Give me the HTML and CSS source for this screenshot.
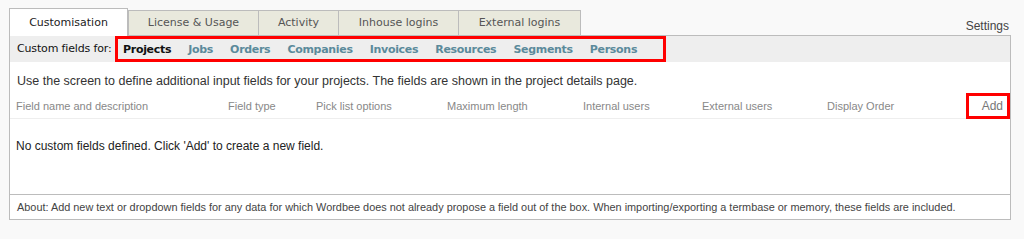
FILE: index.html
```html
<!DOCTYPE html>
<html>
<head>
<meta charset="utf-8">
<link rel="stylesheet" href="styles.css">
</head>
<body>
<div class="page">
  <div class="tabbar">
    <div class="tab tab-active t1">Customisation</div>
    <div class="tab t2">License &amp; Usage</div>
    <div class="tab t3">Activity</div>
    <div class="tab t4">Inhouse logins</div>
    <div class="tab t5">External logins</div>
    <div class="settings">Settings</div>
  </div>
  <div class="panel">
    <div class="band">
      <span class="band-label">Custom fields for:</span>
      <div class="entities">
        <span class="entity current">Projects</span>
        <span class="entity">Jobs</span>
        <span class="entity">Orders</span>
        <span class="entity">Companies</span>
        <span class="entity">Invoices</span>
        <span class="entity">Resources</span>
        <span class="entity">Segments</span>
        <span class="entity">Persons</span>
      </div>
    </div>
    <div class="intro">Use the screen to define additional input fields for your projects. The fields are shown in the project details page.</div>
    <div class="header-row">
      <span class="c1">Field name and description</span>
      <span class="c2">Field type</span>
      <span class="c3">Pick list options</span>
      <span class="c4">Maximum length</span>
      <span class="c5">Internal users</span>
      <span class="c6">External users</span>
      <span class="c7">Display Order</span>
      <span class="add">Add</span>
    </div>
    <div class="empty">No custom fields defined. Click 'Add' to create a new field.</div>
    <div class="about">About: Add new text or dropdown fields for any data for which Wordbee does not already propose a field out of the box. When importing/exporting a termbase or memory, these fields are included.</div>
  </div>
</div>
</body>
</html>
```

FILE: styles.css
```css
html, body {
  margin: 0;
  padding: 0;
  background: #f9f9f9;
}
.page {
  padding: 8px 13px 0 9px;
  font-family: "Liberation Sans", Arial, sans-serif;
}
.tabbar {
  display: flex;
  align-items: flex-end;
  height: 27px;
}
.tab {
  box-sizing: border-box;
  height: 25px;
  border: 1px solid #bcbcbc;
  border-bottom: none;
  background: #e9e9dd;
  color: #555;
  font-family: "DejaVu Sans", Verdana, sans-serif;
  font-size: 11px;
  text-align: center;
  line-height: 23px;
  margin-left: -1px;
}
.tab-active {
  position: relative;
  z-index: 2;
  height: 28px;
  margin-bottom: -1px;
  margin-left: 0;
  background: #fff;
  color: #222;
  line-height: 28px;
}
.t1 { width: 119px; }
.t2 { width: 131px; margin-left: 0; }
.t3 { width: 81px; }
.t4 { width: 121px; }
.t5 { width: 123px; }
.settings {
  margin-left: auto;
  margin-right: 2px;
  font-size: 12px;
  color: #444;
  padding-bottom: 2px;
}
.panel {
  border: 1px solid #bcbcbc;
  background: #fff;
}
.band {
  display: flex;
  align-items: stretch;
  height: 26px;
  background: #eeeeee;
}
.band-label {
  padding-left: 7px;
  width: 98px;
  font-family: "DejaVu Sans", Verdana, sans-serif;
  font-size: 11px;
  letter-spacing: -0.15px;
  color: #111;
  line-height: 26px;
}
.entities {
  box-sizing: border-box;
  width: 551px;
  border: 3px solid #f00;
  display: flex;
  align-items: center;
  gap: 17px;
  padding-left: 5px;
  font-family: "DejaVu Sans", Verdana, sans-serif;
  font-size: 11px;
  letter-spacing: -0.3px;
  font-weight: bold;
  color: #5b8a9b;
}
.entity.current {
  color: #111;
}
.intro {
  margin-top: 12px;
  padding-left: 7px;
  font-size: 12.5px;
  line-height: 14px;
  color: #333;
}
.header-row {
  display: flex;
  align-items: center;
  height: 25px;
  margin-top: 5px;
  padding-left: 6px;
  border-bottom: 1px solid #eeeeee;
  font-size: 11px;
  color: #888;
}
.c1 { width: 212px; }
.c2 { width: 88px; }
.c3 { width: 131px; }
.c4 { width: 136px; }
.c5 { width: 119px; }
.c6 { width: 125px; }
.c7 { width: 100px; }
.add {
  box-sizing: border-box;
  margin-left: auto;
  height: 26px;
  margin-bottom: -1px;
  width: 44px;
  border: 3px solid #f00;
  text-align: right;
  padding-right: 4px;
  line-height: 21px;
  font-size: 12px;
  color: #777;
}
.empty {
  padding: 20px 0 41px 6px;
  font-size: 12px;
  line-height: 14px;
  color: #222;
}
.about {
  border-top: 1px solid #bcbcbc;
  height: 24px;
  line-height: 24px;
  padding-left: 7px;
  font-size: 10.9px;
  color: #444;
}
```
